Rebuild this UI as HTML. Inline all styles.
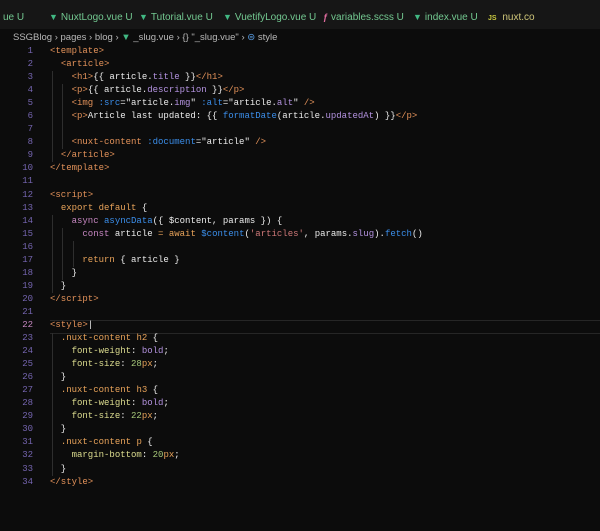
<!DOCTYPE html><html><head><style>
body{margin:0;width:600px;height:531px;background:#0c0c0c;overflow:hidden;font-family:"Liberation Sans",sans-serif;position:relative}
.tabs{position:absolute;left:0;top:0;width:600px;height:29px;background:#161616}
.tab{position:absolute;top:12px;font-size:10px;color:#73c991;white-space:nowrap}
.tab b{color:#41b883;font-size:9px;margin-right:3px}
.bc{position:absolute;left:13px;top:32px;font-size:9.5px;color:#b8b8b8;white-space:nowrap}
.code{position:absolute;left:0;top:45px;font-family:"Liberation Mono",monospace;font-size:9px;line-height:13.06px;color:#ececec}
.l{height:13.06px;white-space:pre;position:relative}
.n{display:inline-block;width:33px;text-align:right;color:#7565b0;margin-right:17px}
.t{color:#e3925a}.p{color:#c586c0}.k{color:#3b8eea}.y{color:#dcdc8f}.g{color:#a7c97a}.s{color:#ce7878}.v{color:#b493e0}.o{color:#e8a35a}
.cur{position:absolute;left:50px;top:320px;width:550px;height:12px;border-top:1px solid #262626;border-bottom:1px solid #262626}
.ig{position:absolute;width:1px;background:#2e2e2e}
</style></head><body>
<div class="tabs">
<div class="tab" style="left:3px">ue U</div>
<div class="tab" style="left:49px"><b>▼</b>NuxtLogo.vue U</div>
<div class="tab" style="left:139px"><b>▼</b>Tutorial.vue U</div>
<div class="tab" style="left:223px"><b>▼</b>VuetifyLogo.vue U</div>
<div class="tab" style="left:323px"><b style="color:#e06c9f">ƒ</b>variables.scss U</div>
<div class="tab" style="left:413px"><b>▼</b>index.vue U</div>
<div class="tab" style="left:488px;color:#cfc67a"><b style="color:#cbcb41;font-size:7px">JS</b> nuxt.co</div>
</div>
<div class="bc">SSGBlog › pages › blog › <span style="color:#41b883">▼</span> _slug.vue › {} "_slug.vue" › <span style="color:#5aa0e8">⊜</span> style</div>
<div class="cur"></div>
<div class="ig" style="left:52px;top:71px;height:91px"></div>
<div class="ig" style="left:62px;top:84px;height:65px"></div>
<div class="ig" style="left:52px;top:215px;height:78px"></div>
<div class="ig" style="left:62px;top:228px;height:52px"></div>
<div class="ig" style="left:73px;top:241px;height:26px"></div>
<div class="ig" style="left:52px;top:333px;height:143px"></div>
<div class="code">
<div class="l"><span class="n">1</span><span class="t">&lt;template&gt;</span></div>
<div class="l"><span class="n">2</span>  <span class="t">&lt;article&gt;</span></div>
<div class="l"><span class="n">3</span>    <span class="t">&lt;h1&gt;</span>{{ article.<span class="v">title</span> }}<span class="t">&lt;/h1&gt;</span></div>
<div class="l"><span class="n">4</span>    <span class="t">&lt;p&gt;</span>{{ article.<span class="v">description</span> }}<span class="t">&lt;/p&gt;</span></div>
<div class="l"><span class="n">5</span>    <span class="t">&lt;img</span> <span class="k">:src</span>="article.<span class="v">img</span>" <span class="k">:alt</span>="article.<span class="v">alt</span>" <span class="t">/&gt;</span></div>
<div class="l"><span class="n">6</span>    <span class="t">&lt;p&gt;</span>Article last updated: {{ <span class="k">formatDate</span>(article.<span class="v">updatedAt</span>) }}<span class="t">&lt;/p&gt;</span></div>
<div class="l"><span class="n">7</span></div>
<div class="l"><span class="n">8</span>    <span class="t">&lt;nuxt-content</span> <span class="k">:document</span>="article" <span class="t">/&gt;</span></div>
<div class="l"><span class="n">9</span>  <span class="t">&lt;/article&gt;</span></div>
<div class="l"><span class="n">10</span><span class="t">&lt;/template&gt;</span></div>
<div class="l"><span class="n">11</span></div>
<div class="l"><span class="n">12</span><span class="t">&lt;script&gt;</span></div>
<div class="l"><span class="n">13</span>  <span class="o">export default</span> {</div>
<div class="l"><span class="n">14</span>    <span class="p">async</span> <span class="k">asyncData</span>({ $content, params }) {</div>
<div class="l"><span class="n">15</span>      <span class="p">const</span> article <span class="o">=</span> <span class="o">await</span> <span class="k">$content</span>(<span class="s">'articles'</span>, params.<span class="v">slug</span>).<span class="k">fetch</span>()</div>
<div class="l"><span class="n">16</span></div>
<div class="l"><span class="n">17</span>      <span class="o">return</span> { article }</div>
<div class="l"><span class="n">18</span>    }</div>
<div class="l"><span class="n">19</span>  }</div>
<div class="l"><span class="n">20</span><span class="t">&lt;/script&gt;</span></div>
<div class="l"><span class="n">21</span></div>
<div class="l"><span class="n" style="color:#c586c0">22</span><span class="t">&lt;style&gt;</span>|</div>
<div class="l"><span class="n">23</span>  <span class="o">.nuxt-content</span> <span class="o">h2</span> {</div>
<div class="l"><span class="n">24</span>    <span class="y">font-weight</span>: <span class="v">bold</span>;</div>
<div class="l"><span class="n">25</span>    <span class="y">font-size</span>: <span class="g">28</span><span class="o">px</span>;</div>
<div class="l"><span class="n">26</span>  }</div>
<div class="l"><span class="n">27</span>  <span class="o">.nuxt-content</span> <span class="o">h3</span> {</div>
<div class="l"><span class="n">28</span>    <span class="y">font-weight</span>: <span class="v">bold</span>;</div>
<div class="l"><span class="n">29</span>    <span class="y">font-size</span>: <span class="g">22</span><span class="o">px</span>;</div>
<div class="l"><span class="n">30</span>  }</div>
<div class="l"><span class="n">31</span>  <span class="o">.nuxt-content</span> <span class="o">p</span> {</div>
<div class="l"><span class="n">32</span>    <span class="y">margin-bottom</span>: <span class="g">20</span><span class="o">px</span>;</div>
<div class="l"><span class="n">33</span>  }</div>
<div class="l"><span class="n">34</span><span class="t">&lt;/style&gt;</span></div>
</div>
</body></html>
